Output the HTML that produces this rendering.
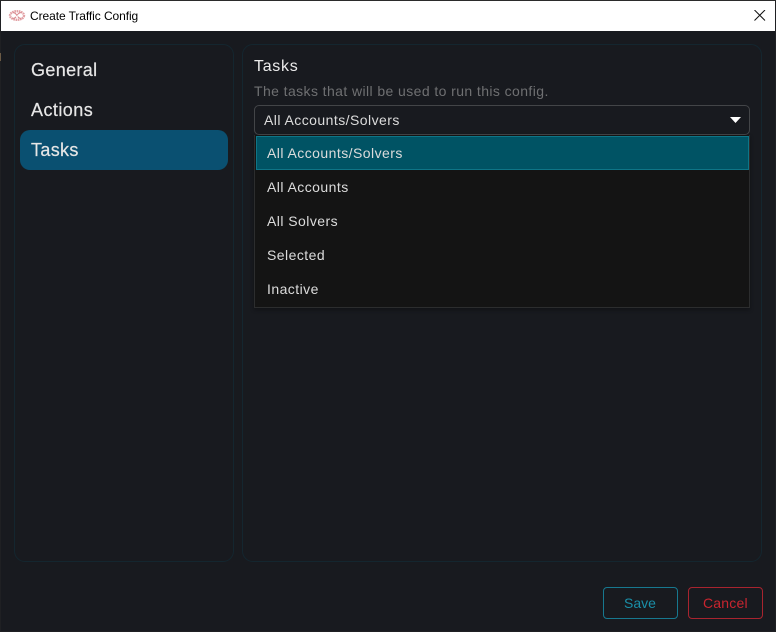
<!DOCTYPE html>
<html>
<head>
<meta charset="utf-8">
<style>
html,body{margin:0;padding:0;}
body{width:776px;height:632px;overflow:hidden;background:#181a1f;position:relative;font-family:"Liberation Sans",sans-serif;}
.a{position:absolute;box-sizing:border-box;}
.t{position:absolute;white-space:nowrap;line-height:20px;height:20px;}
.frame{left:0;top:0;width:776px;height:632px;border:1px solid #1f2023;border-top-color:#2b2b2b;}
.title{left:1px;top:1px;width:774px;height:30px;background:#fff;}
.panel{border:1px solid #14262f;border-radius:11px;background:#181a1f;}
.nav{font-size:18px;letter-spacing:.35px;color:#e6e6e6;left:31px;-webkit-text-stroke:.2px #e6e6e6;}
.item{font-size:14px;letter-spacing:.45px;color:#dcdcdc;left:267px;}
.btn{top:587px;width:75px;height:32px;border-radius:4px;background:transparent;}
</style>
</head>
<body>
<div class="a title"></div>
<svg class="a" style="left:8px;top:9px" width="18" height="13" viewBox="0 0 18 13">
  <ellipse cx="9" cy="6.500" rx="7" ry="4.300" fill="none" stroke="#e2a0a4" stroke-width="2.400" stroke-dasharray="1.600 .6"/>
  <path d="M4.500 3.500C7 3.500 8 5 9 6.500s2 3 4.500 3M4.500 9.500C7 9.500 8 8 9 6.500s2-3 4.500-3" fill="none" stroke="#d98b90" stroke-width="1.100"/>
  <path d="M7.500 6.500l1.300 1.300 2.200-2.400" fill="none" stroke="#fff" stroke-width=".9"/>
</svg>
<div class="t" style="left:30px;top:6px;font-size:12px;letter-spacing:-.08px;color:#000">Create Traffic Config</div>
<svg class="a" style="left:754px;top:10px" width="12" height="11" viewBox="0 0 12 11">
  <path d="M.5 0L11 10.500M11 0L.5 10.500" stroke="#111" stroke-width="1" fill="none"/>
</svg>

<div class="a panel" style="left:14px;top:44px;width:220px;height:518px"></div>
<div class="a" style="left:20px;top:130px;width:208px;height:40px;border-radius:10px;background:#0a5071"></div>
<div class="t nav" style="top:60px">General</div>
<div class="t nav" style="top:100px;letter-spacing:.45px">Actions</div>
<div class="t nav" style="top:140px">Tasks</div>

<div class="a panel" style="left:242px;top:44px;width:520px;height:518px"></div>
<div class="t" style="left:254px;top:56px;font-size:16px;letter-spacing:.7px;color:#ececec;line-height:21px">Tasks</div>
<div class="t" style="left:254px;top:81px;font-size:14px;letter-spacing:.41px;color:#6f7072">The tasks that will be used to run this config.</div>

<div class="a" style="left:254px;top:105px;width:496px;height:30px;border:1px solid #434548;border-radius:5px;background:#181a1f"></div>
<div class="t" style="left:264px;top:110px;font-size:14px;letter-spacing:.45px;color:#dcdcdc">All Accounts/Solvers</div>
<svg class="a" style="left:730px;top:117px" width="11" height="6" viewBox="0 0 11 6"><path d="M0 0H11L5.500 6z" fill="#fff"/></svg>

<div class="a" style="left:254px;top:135px;width:496px;height:173px;background:#141414;border:1px solid #2c2d2e;border-top:0;box-shadow:0 2px 4px rgba(0,0,0,.3)"></div>
<div class="a" style="left:256px;top:136px;width:493px;height:34px;background:#005364;border:1px solid #0e7587"></div>
<div class="t item" style="top:143px">All Accounts/Solvers</div>
<div class="t item" style="top:177px">All Accounts</div>
<div class="t item" style="top:211px">All Solvers</div>
<div class="t item" style="top:245px">Selected</div>
<div class="t item" style="top:279px">Inactive</div>

<div class="a btn" style="left:603px;border:1px solid #17788f"></div>
<div class="t" style="left:624px;top:593px;font-size:14px;color:#1a8fa8">Save</div>
<div class="a btn" style="left:688px;border:1px solid #a8242f"></div>
<div class="t" style="left:703px;top:593px;font-size:14px;letter-spacing:.2px;color:#c9252f">Cancel</div>

<div class="a frame"></div>
<div class="a" style="left:0;top:53px;width:1px;height:8px;background:#6b5a45"></div>
</body>
</html>
